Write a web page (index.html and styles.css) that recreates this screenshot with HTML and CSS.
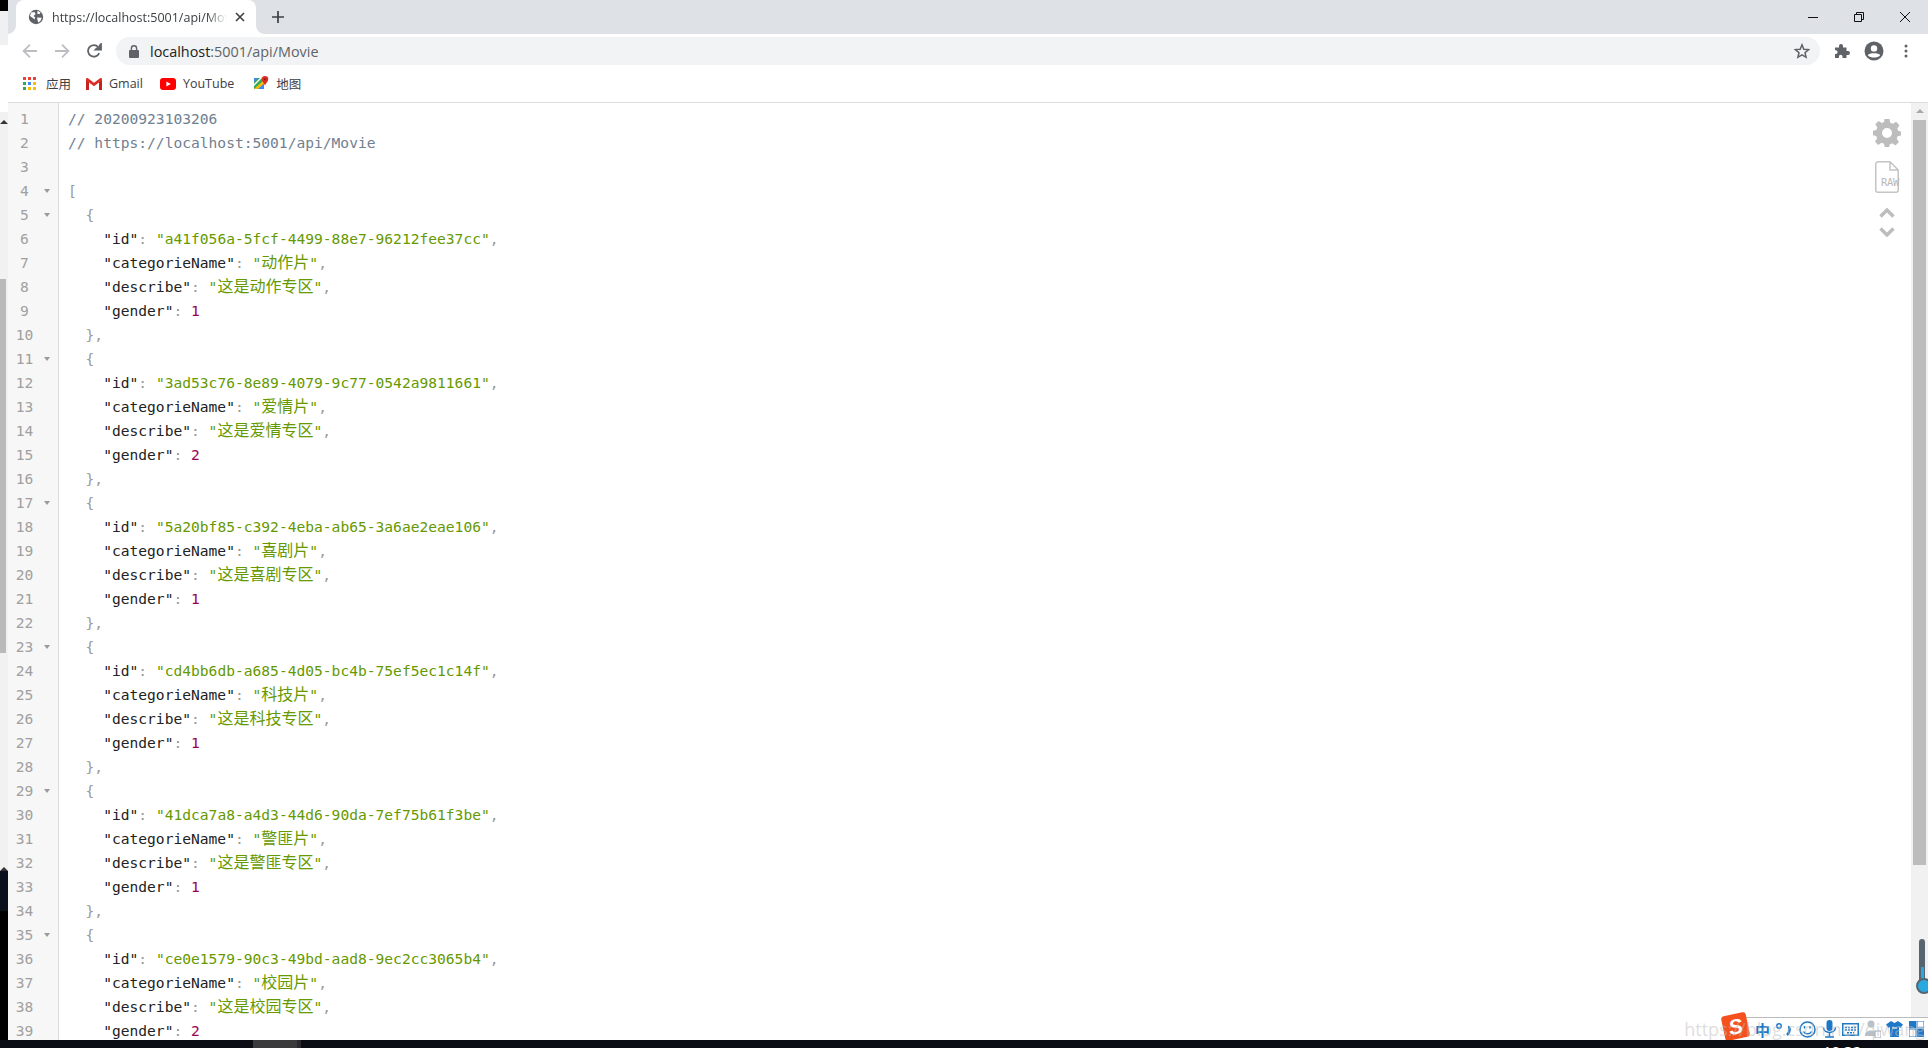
FILE: index.html
```html
<!DOCTYPE html>
<html lang="zh-CN">
<head>
<meta charset="utf-8">
<title>localhost:5001/api/Movie</title>
<link rel="stylesheet" href="styles.css">
</head>
<body>
<div class="desktop">
  <div class="edge">
    <div class="edge-black"></div>
    <div class="edge-pale"></div>
    <div class="edge-white"></div>
    <div class="edge-track"><i class="edge-arrow"></i><div class="edge-gap"></div><div class="edge-thumb"></div><div class="edge-fill"></div><i class="edge-arrow"></i></div>
    <div class="edge-navy"></div>
    <div class="edge-end"></div>
  </div>
  <div class="window">
    <div class="tabstrip">
      <div class="tab">
        <svg class="globe" width="16" height="16" viewBox="0 0 16 16"><circle cx="8" cy="8" r="7.2" fill="#5f6368"/><path d="M3 3.6 6.4 3 7.6 5 5.6 7 7.2 8.6 6.4 10.4 4.8 9 2 7ZM9.6 1.8 12.6 3.6 11.4 5.2 9.2 4.4ZM9 8.6 13.8 8.8 12.4 12 10.2 13.6 9.6 11.2Z" fill="#fff"/></svg>
        <span class="tab-title">https://localhost:5001/api/Movie</span>
        <svg class="tab-x" width="10" height="10" viewBox="0 0 10 10"><path d="M1 1 9 9M9 1 1 9" stroke="#3c4043" stroke-width="1.6"/></svg>
      </div>
      <svg class="newtab" width="12" height="12" viewBox="0 0 12 12"><path d="M6 0V12M0 6H12" stroke="#3c4043" stroke-width="1.7"/></svg>
      <div class="winctl">
        <svg width="12" height="12" viewBox="0 0 12 12"><path d="M1 6.5H11" stroke="#111" stroke-width="1"/></svg>
        <svg width="12" height="12" viewBox="0 0 12 12"><path d="M1.5 3.5H8.5V10.5H1.5ZM3.5 3.5V1.5H10.5V8.5H8.5" fill="none" stroke="#111" stroke-width="1"/></svg>
        <svg width="12" height="12" viewBox="0 0 12 12"><path d="M1 1 11 11M11 1 1 11" stroke="#111" stroke-width="1"/></svg>
      </div>
    </div>
    <div class="toolbar">
      <svg class="nav" width="16" height="16" viewBox="0 0 16 16"><path d="M15 8H2M8 1.6 1.6 8 8 14.4" fill="none" stroke="#bcbec1" stroke-width="1.8"/></svg>
      <svg class="nav" width="16" height="16" viewBox="0 0 16 16"><path d="M1 8H14M8 1.6 14.4 8 8 14.4" fill="none" stroke="#bcbec1" stroke-width="1.8"/></svg>
      <svg class="nav" width="16" height="16" viewBox="0 0 16 16"><path d="M13.2 10.2A5.8 5.8 0 1 1 12.2 4L9.6 6.6H15V1.2L13.2 3" fill="none" stroke="#5f6368" stroke-width="1.8"/><path d="M9.6 6.8H15V1.4Z" fill="#5f6368"/></svg>
      <div class="omnibox">
        <svg width="10" height="13" viewBox="0 0 10 13"><rect x="0" y="5" width="10" height="8" rx="1" fill="#5f6368"/><path d="M2.4 5V3.4a2.6 2.6 0 0 1 5.2 0V5" fill="none" stroke="#5f6368" stroke-width="1.4"/></svg>
        <span class="url">localhost<span class="url-path">:5001/api/Movie</span></span>
        <svg class="star" width="16" height="16" viewBox="0 0 16 16"><path d="M8 1.8 9.8 6.2 14.6 6.6 11 9.7 12.1 14.3 8 11.9 3.9 14.3 5 9.7 1.4 6.6 6.2 6.2Z" fill="none" stroke="#5f6368" stroke-width="1.5"/></svg>
      </div>
      <div class="tool-icons">
        <svg width="16" height="16" viewBox="0 0 16 16"><path d="M1 4.5H5V3a2 2 0 0 1 4 0V4.5H12.5V8H14a2 2 0 0 1 0 4H12.5V15H8.5V13.6a1.8 1.8 0 0 0-3.6 0V15H1V11H2.2a2 2 0 0 0 0-3.8H1Z" fill="#5f6368"/></svg>
        <svg width="20" height="20" viewBox="0 0 20 20"><circle cx="10" cy="10" r="9.5" fill="#5f6368"/><circle cx="10" cy="7.4" r="3.2" fill="#fff"/><path d="M3.8 14.2C5.2 11.6 14.8 11.6 16.2 14.2 14.6 16 12.4 16.6 10 16.6S5.4 16 3.8 14.2Z" fill="#fff"/></svg>
        <svg width="4" height="14" viewBox="0 0 4 14"><circle cx="2" cy="2" r="1.5" fill="#5f6368"/><circle cx="2" cy="7" r="1.5" fill="#5f6368"/><circle cx="2" cy="12" r="1.5" fill="#5f6368"/></svg>
      </div>
    </div>
    <div class="bookmarks">
      <div class="bm bm-apps">
        <svg width="13" height="13" viewBox="0 0 13 13"><g fill="#ea4335"><rect width="3" height="3"/><rect x="5" width="3" height="3"/><rect x="10" width="3" height="3"/></g><rect y="5" width="3" height="3" fill="#34a853"/><rect x="5" y="5" width="3" height="3" fill="#4285f4"/><rect x="10" y="5" width="3" height="3" fill="#fbbc04"/><rect y="10" width="3" height="3" fill="#34a853"/><rect x="5" y="10" width="3" height="3" fill="#fbbc04"/><rect x="10" y="10" width="3" height="3" fill="#fbbc04"/></svg>
        <span>应用</span>
      </div>
      <div class="bm bm-gmail">
        <svg width="16" height="12" viewBox="0 0 16 12"><path d="M0 1.4C0 .2 1.2-.3 2 .3L8 4.8 14 .3C14.800-.3 16 .2 16 1.400V12H13V4.600L8 8.300 3 4.600V12H0Z" fill="#d93025"/><path d="M3 4.600V12H0V2.400Z" fill="#c5221f"/><path d="M13 4.600V12H16V2.400Z" fill="#c5221f"/></svg>
        <span>Gmail</span>
      </div>
      <div class="bm bm-yt">
        <svg width="16" height="12" viewBox="0 0 16 12"><rect width="16" height="12" rx="3" fill="#f00"/><path d="M6.400 3.400 10.800 6 6.400 8.600Z" fill="#fff"/></svg>
        <span>YouTube</span>
      </div>
      <div class="bm bm-map">
        <svg width="15" height="15" viewBox="0 0 15 15"><path d="M0 2H10V13H0Z" fill="#34a853"/><path d="M0 13 10 4V13Z" fill="#fbbc04"/><path d="M4 13 10 7.600V13Z" fill="#4285f4"/><path d="M0 2H4L0 6Z" fill="#4285f4"/><path d="M0 8 6 2H8L0 10Z" fill="#fff"/><path d="M11 0A3.300 3.300 0 0 1 14.300 3.300C14.300 5.400 12 6.800 11 9.500 10 6.800 7.700 5.400 7.700 3.300A3.300 3.300 0 0 1 11 0Z" fill="#d93025"/><circle cx="11" cy="3.300" r="1.100" fill="#8c1c13"/></svg>
        <span>地图</span>
      </div>
    </div>
    <div class="viewer">
      <div class="code">
        <div class="ln"><span class="num">1</span><span class="fold"></span><span class="src"><span class="c">// 20200923103206</span></span></div>
        <div class="ln"><span class="num">2</span><span class="fold"></span><span class="src"><span class="c">// https://localhost:5001/api/Movie</span></span></div>
        <div class="ln"><span class="num">3</span><span class="fold"></span><span class="src"></span></div>
        <div class="ln"><span class="num">4</span><span class="fold open"></span><span class="src"><span class="p">[</span></span></div>
        <div class="ln"><span class="num">5</span><span class="fold open"></span><span class="src">  <span class="p">{</span></span></div>
        <div class="ln"><span class="num">6</span><span class="fold"></span><span class="src">    "id"<span class="p">:</span> <span class="s">"a41f056a-5fcf-4499-88e7-96212fee37cc"</span><span class="p">,</span></span></div>
        <div class="ln"><span class="num">7</span><span class="fold"></span><span class="src">    "categorieName"<span class="p">:</span> <span class="s">"<span class="zh">动作片</span>"</span><span class="p">,</span></span></div>
        <div class="ln"><span class="num">8</span><span class="fold"></span><span class="src">    "describe"<span class="p">:</span> <span class="s">"<span class="zh">这是动作专区</span>"</span><span class="p">,</span></span></div>
        <div class="ln"><span class="num">9</span><span class="fold"></span><span class="src">    "gender"<span class="p">:</span> <span class="n">1</span></span></div>
        <div class="ln"><span class="num">10</span><span class="fold"></span><span class="src">  <span class="p">},</span></span></div>
        <div class="ln"><span class="num">11</span><span class="fold open"></span><span class="src">  <span class="p">{</span></span></div>
        <div class="ln"><span class="num">12</span><span class="fold"></span><span class="src">    "id"<span class="p">:</span> <span class="s">"3ad53c76-8e89-4079-9c77-0542a9811661"</span><span class="p">,</span></span></div>
        <div class="ln"><span class="num">13</span><span class="fold"></span><span class="src">    "categorieName"<span class="p">:</span> <span class="s">"<span class="zh">爱情片</span>"</span><span class="p">,</span></span></div>
        <div class="ln"><span class="num">14</span><span class="fold"></span><span class="src">    "describe"<span class="p">:</span> <span class="s">"<span class="zh">这是爱情专区</span>"</span><span class="p">,</span></span></div>
        <div class="ln"><span class="num">15</span><span class="fold"></span><span class="src">    "gender"<span class="p">:</span> <span class="n">2</span></span></div>
        <div class="ln"><span class="num">16</span><span class="fold"></span><span class="src">  <span class="p">},</span></span></div>
        <div class="ln"><span class="num">17</span><span class="fold open"></span><span class="src">  <span class="p">{</span></span></div>
        <div class="ln"><span class="num">18</span><span class="fold"></span><span class="src">    "id"<span class="p">:</span> <span class="s">"5a20bf85-c392-4eba-ab65-3a6ae2eae106"</span><span class="p">,</span></span></div>
        <div class="ln"><span class="num">19</span><span class="fold"></span><span class="src">    "categorieName"<span class="p">:</span> <span class="s">"<span class="zh">喜剧片</span>"</span><span class="p">,</span></span></div>
        <div class="ln"><span class="num">20</span><span class="fold"></span><span class="src">    "describe"<span class="p">:</span> <span class="s">"<span class="zh">这是喜剧专区</span>"</span><span class="p">,</span></span></div>
        <div class="ln"><span class="num">21</span><span class="fold"></span><span class="src">    "gender"<span class="p">:</span> <span class="n">1</span></span></div>
        <div class="ln"><span class="num">22</span><span class="fold"></span><span class="src">  <span class="p">},</span></span></div>
        <div class="ln"><span class="num">23</span><span class="fold open"></span><span class="src">  <span class="p">{</span></span></div>
        <div class="ln"><span class="num">24</span><span class="fold"></span><span class="src">    "id"<span class="p">:</span> <span class="s">"cd4bb6db-a685-4d05-bc4b-75ef5ec1c14f"</span><span class="p">,</span></span></div>
        <div class="ln"><span class="num">25</span><span class="fold"></span><span class="src">    "categorieName"<span class="p">:</span> <span class="s">"<span class="zh">科技片</span>"</span><span class="p">,</span></span></div>
        <div class="ln"><span class="num">26</span><span class="fold"></span><span class="src">    "describe"<span class="p">:</span> <span class="s">"<span class="zh">这是科技专区</span>"</span><span class="p">,</span></span></div>
        <div class="ln"><span class="num">27</span><span class="fold"></span><span class="src">    "gender"<span class="p">:</span> <span class="n">1</span></span></div>
        <div class="ln"><span class="num">28</span><span class="fold"></span><span class="src">  <span class="p">},</span></span></div>
        <div class="ln"><span class="num">29</span><span class="fold open"></span><span class="src">  <span class="p">{</span></span></div>
        <div class="ln"><span class="num">30</span><span class="fold"></span><span class="src">    "id"<span class="p">:</span> <span class="s">"41dca7a8-a4d3-44d6-90da-7ef75b61f3be"</span><span class="p">,</span></span></div>
        <div class="ln"><span class="num">31</span><span class="fold"></span><span class="src">    "categorieName"<span class="p">:</span> <span class="s">"<span class="zh">警匪片</span>"</span><span class="p">,</span></span></div>
        <div class="ln"><span class="num">32</span><span class="fold"></span><span class="src">    "describe"<span class="p">:</span> <span class="s">"<span class="zh">这是警匪专区</span>"</span><span class="p">,</span></span></div>
        <div class="ln"><span class="num">33</span><span class="fold"></span><span class="src">    "gender"<span class="p">:</span> <span class="n">1</span></span></div>
        <div class="ln"><span class="num">34</span><span class="fold"></span><span class="src">  <span class="p">},</span></span></div>
        <div class="ln"><span class="num">35</span><span class="fold open"></span><span class="src">  <span class="p">{</span></span></div>
        <div class="ln"><span class="num">36</span><span class="fold"></span><span class="src">    "id"<span class="p">:</span> <span class="s">"ce0e1579-90c3-49bd-aad8-9ec2cc3065b4"</span><span class="p">,</span></span></div>
        <div class="ln"><span class="num">37</span><span class="fold"></span><span class="src">    "categorieName"<span class="p">:</span> <span class="s">"<span class="zh">校园片</span>"</span><span class="p">,</span></span></div>
        <div class="ln"><span class="num">38</span><span class="fold"></span><span class="src">    "describe"<span class="p">:</span> <span class="s">"<span class="zh">这是校园专区</span>"</span><span class="p">,</span></span></div>
        <div class="ln"><span class="num">39</span><span class="fold"></span><span class="src">    "gender"<span class="p">:</span> <span class="n">2</span></span></div>
      </div>
      <div class="scrollbar"><i class="sb-arrow"></i><div class="sb-thumb"></div></div>
      <div class="side-tools">
        <svg width="28" height="28" viewBox="0 0 28 28"><path fill-rule="evenodd" d="M11.500 0H16.500L17.300 3.800 19.800 4.800 23.100 2.700 26.500 6.200 24.300 9.400 25.300 11.900 28 12.500V16.500L24.700 17.300 23.700 19.800 25.900 23 22.500 26.500 19.200 24.300 16.800 25.300 16.200 28H11.700L11 24.700 8.500 23.700 5.200 25.900 2 22.500 4.200 19.300 3.200 16.900 0 16.300V11.800L3.300 11 4.300 8.500 2.200 5.200 5.600 1.900 8.800 4 11 3.100ZM14 9A5 5 0 1 0 14 19 5 5 0 0 0 14 9Z" fill="#bdbdbd"/></svg>
        <div class="raw"><svg class="raw-page" width="24" height="32" viewBox="0 0 24 32"><path d="M3 .75H15L23.250 9V29A2.250 2.250 0 0 1 21 31.250H3A2.250 2.250 0 0 1 .75 29V3A2.250 2.250 0 0 1 3 .75ZM15 .75V9H23.250" fill="none" stroke="#c4c4c4" stroke-width="1.500"/></svg><span class="raw-label">RAW</span></div>
        <div class="chev">
          <svg width="16" height="10" viewBox="0 0 16 10"><path d="M1.500 8.500 8 2 14.500 8.500" fill="none" stroke="#bdbdbd" stroke-width="3.400"/></svg>
          <svg width="16" height="10" viewBox="0 0 16 10"><path d="M1.500 1.500 8 8 14.500 1.500" fill="none" stroke="#bdbdbd" stroke-width="3.400"/></svg>
        </div>
      </div>
      <div class="thermo"><div class="thermo-fill"></div></div>
      <div class="ime">
        <div class="ime-logo"><span>S</span></div>
        <span class="ime-zh">中</span>
        <svg width="18" height="16" viewBox="0 0 18 16"><circle cx="3" cy="5" r="2.200" fill="none" stroke="#1e78c8" stroke-width="1.500"/><path d="M12 6C14 6 14.500 11 11 14" fill="none" stroke="#1e78c8" stroke-width="2.600"/></svg>
        <svg width="17" height="17" viewBox="0 0 17 17"><circle cx="8.500" cy="8.500" r="7.500" fill="none" stroke="#1e78c8" stroke-width="1.500"/><path d="M5.500 5V7.500M11 5V7.500" stroke="#1e78c8" stroke-width="1.500"/><path d="M4.500 10.500C6 13.500 11 13.500 12.500 10.500" fill="none" stroke="#1e78c8" stroke-width="1.500"/></svg>
        <svg width="15" height="18" viewBox="0 0 15 18"><rect x="4.500" y="0" width="6" height="11" rx="3" fill="#1e78c8"/><path d="M1.500 7.500C1.500 14 13.500 14 13.500 7.500M7.500 12V17M3 17H12" fill="none" stroke="#1e78c8" stroke-width="1.500"/></svg>
        <svg width="17" height="13" viewBox="0 0 17 13"><rect x=".75" y=".75" width="15.500" height="11.500" fill="none" stroke="#1e78c8" stroke-width="1.500"/><path d="M3 4.500H14M3 7H14M5 9.700H12" stroke="#1e78c8" stroke-width="1.500" stroke-dasharray="2 1"/></svg>
        <svg width="16" height="18" viewBox="0 0 16 18"><circle cx="6" cy="4" r="3.500" fill="#b9c0c8"/><path d="M0 15C0 9 12 9 12 15V16H0Z" fill="#b9c0c8"/><rect x="10" y="11" width="6" height="7" fill="#fff" stroke="#9aa5b1"/></svg>
        <svg width="17" height="16" viewBox="0 0 17 16"><path d="M5 0 8.500 2 12 0 17 3.500 14.500 7 13 6V16H4V6L2.500 7 0 3.500Z" fill="#1e78c8"/><path d="M6 7H11" stroke="#fff" stroke-width="1.200"/></svg>
        <svg width="15" height="16" viewBox="0 0 15 16"><rect width="7" height="7" fill="#1e78c8"/><rect x="8" width="7" height="7" fill="none" stroke="#1e78c8"/><rect y="8" width="7" height="8" fill="none" stroke="#1e78c8"/><rect x="8" y="8" width="7" height="8" fill="#1e78c8"/></svg>
      </div>
      <span class="watermark">https://blog.csdn.net/qiwang</span>
    </div>
  </div>
</div>
<div class="taskbar">
  <div class="task-active"></div>
  <div class="task-sep"></div>
  <span class="clock">10:32</span>
</div>
</body>
</html>
```
FILE: styles.css
```css
* { box-sizing: border-box; }
html, body { margin: 0; height: 100%; overflow: hidden; background: #000; }
body { width: 1928px; height: 1048px; font-family: "Open Sans", "Noto Sans CJK SC", sans-serif; }
svg { display: block; flex: none; }

.desktop { display: flex; height: 1040px; }

/* Sliver of the window behind, at the left edge */
.edge { width: 8px; flex: none; display: flex; flex-direction: column; }
.edge-black { height: 11px; background: #000; }
.edge-pale { height: 34px; background: #eef0f2; }
.edge-white { height: 67px; background: #fff; }
.edge-track { height: 759px; background: #f1f1f1; display: flex; flex-direction: column; align-items: flex-start; }
.edge-arrow { width: 0; height: 0; margin: 8px 0 0; border: 4px solid transparent; border-top-width: 0; border-bottom: 4px solid #333; }
.edge-gap { height: 155px; }
.edge-thumb { width: 6px; height: 374px; background: #b9b9b9; }
.edge-fill { flex: 1; }
.edge-navy { height: 40px; background: #0b111c; }
.edge-end { flex: 1; background: #000; }

.window { flex: 1; min-width: 0; display: flex; flex-direction: column; background: #fff; }

.tabstrip { height: 34px; flex: none; background: #dee1e6; display: flex; align-items: center; padding-left: 8px; }
.tab { position: relative; width: 240px; height: 34px; background: #fff; border-radius: 8px 8px 0 0; display: flex; align-items: center; padding-left: 12px; }
.tab::before, .tab::after { content: ""; position: absolute; bottom: 0; width: 8px; height: 8px; }
.tab::before { left: -8px; background: radial-gradient(circle at 0 0, #dee1e6 7.5px, #fff 8px); }
.tab::after { right: -8px; background: radial-gradient(circle at 100% 0, #dee1e6 7.5px, #fff 8px); }
.tab-title { margin-left: 8px; width: 175px; overflow: hidden; white-space: nowrap; font-size: 12.5px; color: #3c4043; -webkit-mask-image: linear-gradient(to right, #000 155px, transparent 175px); mask-image: linear-gradient(to right, #000 155px, transparent 175px); }
.tab-x { margin-left: 8px; }
.newtab { margin-left: 16px; }
.winctl { margin-left: auto; display: flex; gap: 34px; padding-right: 17px; }

.toolbar { height: 34px; flex: none; display: flex; align-items: center; padding-left: 14px; }
.nav { margin-right: 16px; }
.omnibox { width: 1704px; height: 28px; margin-left: -2px; border-radius: 14px; background: #f1f3f4; display: flex; align-items: center; padding: 0 10px 0 13px; }
.url { margin-left: 11px; font-size: 14.4px; color: #202124; }
.url-path { color: #5f6368; }
.star { margin-left: auto; }
.tool-icons { display: flex; align-items: center; margin-left: 14px; gap: 0; }
.tool-icons svg:nth-child(2) { margin-left: 14px; }
.tool-icons svg:nth-child(3) { margin-left: 20px; }

.bookmarks { height: 35px; flex: none; display: flex; align-items: center; padding-bottom: 3px; border-bottom: 1px solid #dcdcdc; font-size: 12.500px; color: #3c4043; }
.bm { display: flex; align-items: center; }
.bm-apps { margin-left: 15px; gap: 10px; }
.bm-gmail { margin-left: 15px; gap: 7px; }
.bm-yt { margin-left: 17px; gap: 7px; }
.bm-map { margin-left: 20px; gap: 7px; }

.viewer { position: relative; flex: 1; min-height: 0; overflow: hidden; }
.code { height: 100%; padding-top: 4px; font: 14.600px/24px "DejaVu Sans Mono", "Noto Sans CJK SC", monospace; color: #222; background: linear-gradient(to right, #f7f7f7 50px, #ddd 50px, #ddd 51px, #fff 51px); overflow: hidden; }
.ln { display: flex; height: 24px; }
.num { width: 33px; flex: none; text-align: center; color: #a0a0a0; }
.fold { width: 17px; flex: none; position: relative; }
.fold.open::after { content: ""; position: absolute; left: 3px; top: 10px; border: 3px solid transparent; border-top: 4px solid #999; border-bottom-width: 0; }
.src { margin-left: 10px; white-space: pre; }
.c { color: #708090; }
.p { color: #999; }
.s { color: #690; }
.n { color: #905; }
.zh { font-size: 16px; line-height: 1; }

.scrollbar { position: absolute; top: 0; right: 0; bottom: 23px; width: 17px; background: #f1f1f1; display: flex; flex-direction: column; align-items: center; }
.sb-arrow { margin-top: 6px; border: 4px solid transparent; border-top-width: 0; border-bottom: 4px solid #a8a8a8; }
.sb-thumb { margin-top: 7px; width: 13px; height: 745px; background: #bcbcbc; }

.side-tools { position: absolute; top: 16px; right: 27px; display: flex; flex-direction: column; align-items: center; gap: 14px; width: 28px; }
.raw { position: relative; width: 24px; height: 32px; }
.raw-label { position: absolute; left: 6px; top: 15px; font: 10.500px/12px "DejaVu Sans Mono", monospace; color: #b8b8b8; letter-spacing: -.3px; }
.chev { display: flex; flex-direction: column; gap: 9px; margin-top: 1px; }

.thermo { position: absolute; left: 1911px; top: 836px; width: 6px; height: 48px; background: #56656f; border-radius: 3px 3px 0 0; }
.thermo-fill { position: absolute; left: 1.500px; top: 28px; bottom: 0; width: 3px; background: #29a9e0; }
.thermo::after { content: ""; position: absolute; left: -3px; bottom: -7px; width: 12px; height: 12px; border-radius: 50%; background: #29a9e0; border: 2.500px solid #56656f; }

.ime { position: absolute; right: 0; bottom: 0; width: 182px; height: 23px; background: #fff; border-top: 1.500px solid #bcbcbc; display: flex; align-items: center; justify-content: space-between; padding: 0 4px 0 9px; }
.ime-logo { position: absolute; left: -23px; top: -4px; width: 25px; height: 25px; border-radius: 3px; background: #f4511e; transform: rotate(-12deg); display: flex; align-items: center; justify-content: center; }
.ime-logo span { font: italic 700 21px/1 "Liberation Sans", sans-serif; color: #fff; }
.ime-zh { font: 700 15px/1 "Noto Sans CJK SC", sans-serif; color: #1e78c8; }

.watermark { position: absolute; right: 3px; bottom: 1px; font: 18px/20px "Open Sans", sans-serif; color: rgba(190, 190, 190, .5); white-space: nowrap; }

.taskbar { height: 8px; position: relative; overflow: hidden; background: #0a0d14; display: flex; padding-left: 253px; }
.task-active { width: 44px; height: 8px; background: #3a3a3c; }
.task-sep { width: 4px; height: 8px; background: #2a2a2c; }
.clock { position: absolute; left: 1823px; top: 1px; font: 15px/20px "Open Sans", sans-serif; color: #fff; }
```
